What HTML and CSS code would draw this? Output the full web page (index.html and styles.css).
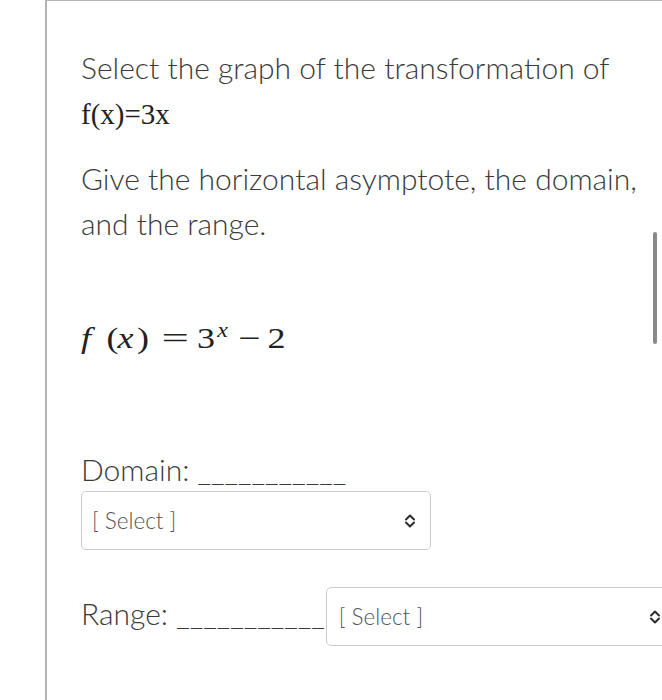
FILE: index.html
```html
<!DOCTYPE html>
<html lang="en">
<head>
<meta charset="utf-8">
<title>Quiz question</title>
<link rel="stylesheet" href="styles.css">
</head>
<body>
<div class="panel">
  <p class="para">Select the graph of the transformation of <span class="serif">f(x)=3x</span></p>
  <p class="para para-2">Give the horizontal asymptote, the domain, and the range.</p>
  <div class="math"><i class="m-f">f</i><span class="m-lp">(</span><i class="m-x">x</i><span class="m-rp">)</span><span class="m-eq">=</span><span class="m-3">3</span><sup class="m-sup">x</sup><span class="m-minus">−</span><span class="m-2">2</span></div>
  <div class="answer">Domain: <span class="blank">___________</span></div>
  <div class="select select-block">
    <span class="select-text">[ Select ]</span>
    <svg class="chev" width="12" height="16" viewBox="0 0 12 16"><path d="M2 6.5 L6 2.5 L10 6.5 M2 9.5 L6 13.5 L10 9.5" fill="none" stroke="#2d2d2d" stroke-width="2" stroke-linecap="round" stroke-linejoin="round"/></svg>
  </div>
  <div class="answer answer-range">Range: <span class="blank">___________</span><span class="select select-inline"><span class="select-text">[ Select ]</span><svg class="chev" width="12" height="16" viewBox="0 0 12 16"><path d="M2 6.5 L6 2.5 L10 6.5 M2 9.5 L6 13.5 L10 9.5" fill="none" stroke="#2d2d2d" stroke-width="2" stroke-linecap="round" stroke-linejoin="round"/></svg></span></div>
  <div class="scroll-thumb"></div>
</div>
</body>
</html>
```
FILE: styles.css
```css
html, body {
  margin: 0;
  padding: 0;
  overflow: hidden;
  background: #fff;
}

body {
  width: 662px;
  height: 700px;
  font-family: Lato, "Open Sans", sans-serif;
  font-weight: 300;
  color: #3a3a3a;
}

.panel {
  position: relative;
  margin-left: 45px;
  height: 700px;
  box-sizing: border-box;
  border-top: 1px solid #b4b4b4;
  border-left: 2px solid #b4b4b4;
  padding: 44px 0 0 34px;
  overflow: hidden;
}

.para {
  margin: 0;
  font-size: 30px;
  line-height: 45px;
  width: 570px;
}

.para-2 {
  margin-top: 19px;
}

.serif {
  font-family: "Liberation Serif", "Times New Roman", serif;
  font-weight: 400;
  font-size: 29px;
  color: #222;
}

/* formula: slightly widened like the MathJax rendering */
.math {
  margin-top: 72px;
  font-family: "Liberation Serif", "Times New Roman", serif;
  font-weight: 400;
  font-size: 30px;
  line-height: 40px;
  color: #222;
  white-space: nowrap;
  transform: scaleX(1.2);
  transform-origin: 0 0;
}

.m-f {
  margin-right: 13px;
}

.m-x {
  margin-left: -1px;
  margin-right: 3px;
}

.m-eq {
  display: inline-block;
  transform: scaleX(1.35);
  margin-left: 13px;
}

.m-3 {
  margin-left: 10px;
}

.m-sup {
  font-style: italic;
  font-size: 20px;
  line-height: 0;
  vertical-align: 11px;
  margin-left: 2px;
}

.m-minus {
  display: inline-block;
  transform: scaleX(1.1);
  margin-left: 10px;
}

.m-2 {
  margin-left: 6px;
}

.answer {
  margin-top: 89px;
  font-size: 30px;
  line-height: 44px;
  white-space: nowrap;
}

.select {
  box-sizing: border-box;
  width: 350px;
  height: 59px;
  border: 1px solid #c9cdd0;
  border-radius: 5px;
  background: #fff;
  display: flex;
  align-items: center;
  justify-content: space-between;
  padding: 0 14px 0 10px;
}

.select-inline {
  display: inline-flex;
  padding-left: 12px;
  margin-left: 1px;
}

.select-text {
  font-size: 22.5px;
  color: #555;
  line-height: 24px;
}

.chev {
  display: block;
}

.answer-range {
  margin-top: 37px;
}

.scroll-thumb {
  position: absolute;
  left: 606px;
  top: 231px;
  width: 4px;
  height: 112px;
  border-radius: 2px;
  background: #8a8a8a;
}
```
